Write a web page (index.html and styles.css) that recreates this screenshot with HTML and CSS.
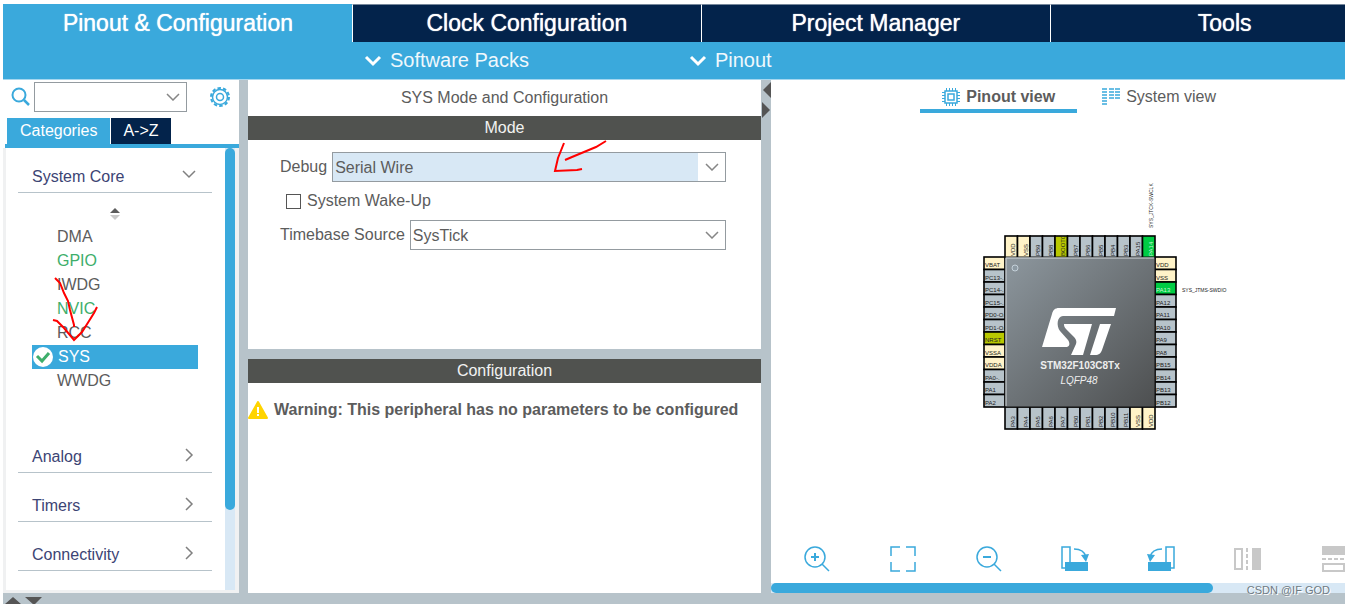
FILE: index.html
```html
<!DOCTYPE html>
<html lang="en">
<head>
    <meta charset="UTF-8">
    <meta name="viewport" content="width=device-width, initial-scale=1.0">
    <title>Pinout & Configuration</title>
    <link rel="stylesheet" href="styles.css">
</head>
<body>
    <div class="app">
        <nav class="main-tabs">
            <button class="main-tab active">Pinout &amp; Configuration</button>
            <button class="main-tab">Clock Configuration</button>
            <button class="main-tab">Project Manager</button>
            <button class="main-tab">Tools</button>
        </nav>

        <div class="sub-bar">
            <button class="sub-menu">
                <svg width="18" height="12" viewBox="0 0 18 12"><path d="M2 2l7 7 7-7" fill="none" stroke="#fff" stroke-width="3"/></svg>
                Software Packs
            </button>
            <button class="sub-menu">
                <svg width="18" height="12" viewBox="0 0 18 12"><path d="M2 2l7 7 7-7" fill="none" stroke="#fff" stroke-width="3"/></svg>
                Pinout
            </button>
        </div>

        <main class="workspace">
            <aside class="sidebar">
                <div class="search-row">
                    <svg width="20" height="20" viewBox="0 0 20 20"><circle cx="8" cy="8" r="6.5" fill="none" stroke="#3aa9dc" stroke-width="2"/><path d="M13 13l5 5" stroke="#3aa9dc" stroke-width="2.5"/></svg>
                    <div class="combo search-combo">
                        <input type="text" class="combo-field" aria-label="Search">
                        <svg class="combo-arrow" width="14" height="8" viewBox="0 0 14 8"><path d="M1 1l6 6 6-6" fill="none" stroke="#868686" stroke-width="1.5"/></svg>
                    </div>
                    <button class="icon-button gear" aria-label="Settings">
                        <svg width="22" height="22" viewBox="0 0 22 22" fill="none" stroke="#3aa9dc">
                            <circle cx="11" cy="11" r="9" stroke-width="2" stroke-dasharray="3.5 2.15"/>
                            <circle cx="11" cy="11" r="7.5" stroke-width="1.5"/>
                            <circle cx="11" cy="11" r="3.5" stroke-width="1.5"/>
                        </svg>
                    </button>
                </div>

                <div class="side-tabs">
                    <button class="side-tab active">Categories</button>
                    <button class="side-tab">A-&gt;Z</button>
                </div>

                <div class="category-box">
                    <div class="categories">
                        <button class="category first">System Core
                            <svg width="14" height="20" viewBox="0 0 14 20"><path d="M1 4l6 6 6-6" fill="none" stroke="#808080" stroke-width="1.5"/></svg>
                        </button>
                        <div class="sort">
                            <svg width="10" height="14" viewBox="0 0 10 14"><path d="M0 6l5-5 5 5z" fill="#5c5c5c"/><path d="M0 8h10l-5 5z" fill="#c9c9c9"/></svg>
                        </div>
                        <ul class="items">
                            <li>DMA</li>
                            <li class="enabled">GPIO</li>
                            <li>IWDG</li>
                            <li class="enabled">NVIC</li>
                            <li>RCC</li>
                            <li class="selected">
                                <svg width="20" height="20" viewBox="0 0 20 20"><circle cx="10" cy="10" r="10" fill="#fff"/><path d="M4 9l5 5 7-8" fill="none" stroke="#3eae6b" stroke-width="3"/></svg>
                                SYS
                            </li>
                            <li>WWDG</li>
                        </ul>
                        <button class="category">Analog
                            <svg width="14" height="20" viewBox="0 0 14 20"><path d="M4 2l6 6-6 6" fill="none" stroke="#808080" stroke-width="1.5"/></svg>
                        </button>
                        <button class="category">Timers
                            <svg width="14" height="20" viewBox="0 0 14 20"><path d="M4 2l6 6-6 6" fill="none" stroke="#808080" stroke-width="1.5"/></svg>
                        </button>
                        <button class="category">Connectivity
                            <svg width="14" height="20" viewBox="0 0 14 20"><path d="M4 2l6 6-6 6" fill="none" stroke="#808080" stroke-width="1.5"/></svg>
                        </button>
                    </div>
                    <div class="v-scroll"><div class="v-thumb"></div></div>
                </div>
            </aside>

            <section class="config">
                <div class="mode-panel">
                    <h1 class="panel-title">SYS Mode and Configuration</h1>
                    <h2 class="bar">Mode</h2>
                    <form class="mode-form">
                        <div class="field">
                            <label for="debug">Debug</label>
                            <div class="combo">
                                <select id="debug" class="combo-field highlighted">
                                    <option>Serial Wire</option>
                                </select>
                                <svg class="combo-arrow" width="14" height="8" viewBox="0 0 14 8"><path d="M1 1l6 6 6-6" fill="none" stroke="#868686" stroke-width="1.5"/></svg>
                            </div>
                        </div>
                        <div class="field check">
                            <input type="checkbox" id="wakeup">
                            <label for="wakeup">System Wake-Up</label>
                        </div>
                        <div class="field">
                            <label for="timebase">Timebase Source</label>
                            <div class="combo">
                                <select id="timebase" class="combo-field">
                                    <option>SysTick</option>
                                </select>
                                <svg class="combo-arrow" width="14" height="8" viewBox="0 0 14 8"><path d="M1 1l6 6 6-6" fill="none" stroke="#868686" stroke-width="1.5"/></svg>
                            </div>
                        </div>
                    </form>
                </div>
                <div class="params-panel">
                    <h2 class="bar">Configuration</h2>
                    <p class="warning">
                        <svg width="20" height="18" viewBox="0 0 20 18"><path d="M10 1L19 17H1z" fill="#ffd400" stroke="#ffd400" stroke-width="2" stroke-linejoin="round"/><path d="M10 6v6M10 13v2" stroke="#fff" stroke-width="2"/></svg>
                        <span>Warning: This peripheral has no parameters to be configured</span>
                    </p>
                </div>
            </section>

            <div class="splitter">
                <svg width="10" height="40" viewBox="0 0 10 40"><path d="M10 2v16L2 10z M1 22v16l8-8z" fill="#555"/></svg>
            </div>

            <section class="pinout">
                <div class="view-tabs">
                    <button class="view-tab active">
                        <svg width="18" height="18" viewBox="0 0 18 18" fill="none" stroke="#3aa9dc">
                            <path d="M4.500 0v3M7.500 0v3M10.500 0v3M13.500 0v3M4.500 15v3M7.500 15v3M10.500 15v3M13.500 15v3M0 4.500h3M0 7.500h3M0 10.500h3M0 13.500h3M15 4.500h3M15 7.500h3M15 10.500h3M15 13.500h3"/>
                            <rect x="3" y="3" width="12" height="12" stroke-width="1.500"/>
                            <rect x="6" y="6" width="6" height="6" stroke-width="1.500"/>
                        </svg>
                        Pinout view
                    </button>
                    <button class="view-tab">
                        <svg width="18" height="18" viewBox="0 0 18 18" stroke="#3aa9dc" stroke-width="1.5">
                            <path d="M0 1h5M0 4h5M0 7h5M0 10h5M0 13h5M0 16h5M7 1h5M7 4h5M7 7h5M7 10h5M13 1h5M13 4h5M13 7h5M13 10h5"/>
                        </svg>
                        System view
                    </button>
                </div>

                <div class="chip-area">
                    <svg class="chip" width="260" height="260" viewBox="975 175 260 260">
                        <defs>
                            <linearGradient id="body" x1="0" y1="0" x2="1" y2="1">
                                <stop offset="0" stop-color="#8d979e"/>
                                <stop offset="1" stop-color="#4d4f50"/>
                            </linearGradient>
                        </defs>
                        <g id="pins"></g>
                        <rect x="1005" y="257" width="150" height="150" fill="url(#body)" stroke="#111"/>
                        <path d="M1006 406V258h148" fill="none" stroke="#d5dadd"/>
                        <circle cx="1015" cy="268" r="3" fill="#8d9aa3" stroke="#c4d0d8"/>
                        <!-- ST logo -->
                        <g fill="#fff">
                            <path d="M1116 308L1114 316H1063C1057 316 1056 326 1060 331L1068 340C1070 343 1070 346 1067 347H1042L1052 314C1053 310 1055 308 1059 308z"/>
                            <path d="M1064 324H1092L1083 355H1071L1076 344C1077 341 1076 339 1073 336L1066 329C1064 327 1064 325 1064 324z"/>
                            <path d="M1100 324H1111L1102 350C1101 353 1099 355 1095 355H1090z"/>
                        </g>
                        <text class="chip-name" x="1080" y="369">STM32F103C8Tx</text>
                        <text class="chip-package" x="1079" y="384">LQFP48</text>
                        <text class="signal" x="1182" y="292">SYS_JTMS-SWDIO</text>
                        <text class="signal" transform="translate(1153 228) rotate(-90)">SYS_JTCK-SWCLK</text>
                    </svg>
                </div>

                <div class="toolbar">
                    <button class="icon-button" aria-label="Zoom in">
                        <svg width="26" height="26" viewBox="0 0 26 26" fill="none" stroke="#3aa9dc" stroke-width="1.5"><circle cx="11" cy="11" r="10"/><path d="M18 18l7 7"/><path d="M7 11h8M11 7v8" stroke-width="2"/></svg>
                    </button>
                    <button class="icon-button" aria-label="Fit">
                        <svg width="26" height="26" viewBox="0 0 26 26" fill="none" stroke="#3aa9dc" stroke-width="1.5"><path d="M1 10V1h9M16 1h9v9M25 16v9h-9M10 25H1v-9"/></svg>
                    </button>
                    <button class="icon-button" aria-label="Zoom out">
                        <svg width="26" height="26" viewBox="0 0 26 26" fill="none" stroke="#3aa9dc" stroke-width="1.5"><circle cx="11" cy="11" r="10"/><path d="M18 18l7 7"/><path d="M7 11h8" stroke-width="2"/></svg>
                    </button>
                    <button class="icon-button" aria-label="Rotate right">
                        <svg width="28" height="26" viewBox="0 0 28 26"><path d="M1 1h8v21H1zM13 3q10 0 12 8" fill="none" stroke="#3aa9dc" stroke-width="1.5"/><path d="M4 16h23v9H4zM20 9l8-1-3 8z" fill="#3aa9dc"/></svg>
                    </button>
                    <button class="icon-button" aria-label="Rotate left">
                        <svg width="28" height="26" viewBox="0 0 28 26"><path d="M27 1h-8v21h8zM15 3Q5 3 3 11" fill="none" stroke="#3aa9dc" stroke-width="1.5"/><path d="M24 16H1v9h23zM8 9L0 8l3 8z" fill="#3aa9dc"/></svg>
                    </button>
                    <button class="icon-button" aria-label="Flip horizontally">
                        <svg width="28" height="26" viewBox="0 0 28 26"><path d="M2 3h7v20H2z" fill="none" stroke="#c8c8c8" stroke-width="2"/><path d="M14 2v22" stroke="#c8c8c8" stroke-width="2" stroke-dasharray="4 2"/><path d="M19 2h9v22h-9z" fill="#c8c8c8"/></svg>
                    </button>
                    <button class="icon-button" aria-label="Flip vertically">
                        <svg width="26" height="28" viewBox="0 0 26 28"><path d="M2 1h23v9H2z" fill="#c8c8c8"/><path d="M2 14h23" stroke="#c8c8c8" stroke-width="2" stroke-dasharray="4 2"/><path d="M3 19h21v7H3z" fill="none" stroke="#c8c8c8" stroke-width="2"/></svg>
                    </button>
                </div>
                <div class="h-scroll"><div class="h-thumb"></div></div>
            </section>
        </main>

        <footer class="bottom-bar">
            <svg width="40" height="8" viewBox="0 0 40 8"><path d="M2 8l8-7 8 7zM22 1h17l-8 8z" fill="#555"/></svg>
        </footer>

        <!-- hand drawn arrows -->
        <svg class="marks" width="700" height="400" viewBox="0 0 700 400">
            <path d="M55 278l5 5 4 10 4 8 2 9 4 15 0 2M53 320l4 1 7 7 10 12 8-8 7-11 5-8 3-6"/>
            <path d="M564 143l-6 15-3 13 22-1 5-1M606 141l-10 6-12 5-12 5-7 3"/>
        </svg>
        <span class="credit">CSDN @IF GOD</span>
    </div>

    <script src="script.js"></script>
</body>
</html>
```

FILE: script.js
```js
// pins of the LQFP48 package, listed left to right and top to bottom
const sides = {
    left: ['VBAT', 'PC13-.', 'PC14-.', 'PC15-.', 'PD0-O.', 'PD1-O.', 'NRST', 'VSSA', 'VDDA', 'PA0-.', 'PA1', 'PA2'],
    right: ['VDD', 'VSS', 'PA13', 'PA12', 'PA11', 'PA10', 'PA9', 'PA8', 'PB15', 'PB14', 'PB13', 'PB12'],
    top: ['VDD', 'VSS', 'PB9', 'PB8', 'BOOT0', 'PB7', 'PB6', 'PB5', 'PB4', 'PB3', 'PA15', 'PA14'],
    bottom: ['PA3', 'PA4', 'PA5', 'PA6', 'PA7', 'PB0', 'PB1', 'PB2', 'PB10', 'PB11', 'VSS', 'VDD']
};

const step = 12.5;
const svgNs = 'http://www.w3.org/2000/svg';
const group = document.getElementById('pins');

function pinColor(name) {
    if (name.startsWith('V')) return '#fff3c8';
    if (name === 'NRST' || name === 'BOOT0') return '#b9c800';
    if (name === 'PA13' || name === 'PA14') return '#00cc44';
    return '#b7c3ca';
}

function add(tag, attrs) {
    const el = document.createElementNS(svgNs, tag);
    for (const key in attrs) {
        el.setAttribute(key, attrs[key]);
    }
    group.appendChild(el);
    return el;
}

Object.keys(sides).forEach(function(side) {
    const upright = side === 'left' || side === 'right';
    sides[side].forEach(function(name, i) {
        const x = upright ? (side === 'left' ? 984 : 1155) : 1005 + i * step;
        const y = upright ? 257 + i * step : (side === 'top' ? 236 : 407);
        add('rect', {
            x: x, y: y,
            width: upright ? 21 : step,
            height: upright ? step : 22,
            fill: pinColor(name),
            stroke: '#000', 'stroke-width': 1.6
        });
        const text = add('text', {
            class: name === 'PA13' || name === 'PA14' ? 'pin-label used' : 'pin-label',
            transform: upright
                ? 'translate(' + (x + 1) + ' ' + (y + 10) + ')'
                : 'translate(' + (x + 10) + ' ' + (y + 20) + ') rotate(-90)'
        });
        text.textContent = name;
    });
});
```

FILE: styles.css
```css
* {
    box-sizing: border-box;
}
body {
    margin: 0;
    font-family: "Liberation Sans", Arial, sans-serif;
    font-size: 16px;
    color: #5c5c5c;
    background-color: #fff;
}
button, input, select {
    font: inherit;
    color: inherit;
}
button {
    border: none;
    background: none;
    padding: 0;
    cursor: pointer;
}
svg {
    flex-shrink: 0;
}
.app {
    position: relative;
    display: flex;
    flex-direction: column;
    min-height: 100vh;
    padding: 4px 0 0 3px;
    overflow: hidden;
}

/* header */
.main-tabs {
    display: grid;
    grid-template-columns: repeat(4, 26%);
    height: 38px;
    background-color: #03234b;
}
.main-tab {
    color: #fff;
    font-size: 23px;
    text-shadow: 0 0 1px #fff;
    border-top: 1px solid #76879b;
    border-left: 1px solid #fff;
}
.main-tab.active {
    background-color: #3aa9dc;
    border-color: #3aa9dc;
}
.sub-bar {
    display: flex;
    gap: 160px;
    height: 38px;
    padding-left: 361px;
    background-color: #3aa9dc;
    border-bottom: 1px solid #a5d7ef;
}
.sub-menu {
    display: flex;
    align-items: center;
    gap: 8px;
    color: #f0f8fc;
    font-size: 20px;
}

.workspace {
    flex: 1;
    display: grid;
    grid-template-columns: 236px 522px 10px 1fr;
}

/* sidebar */
.sidebar {
    display: flex;
    flex-direction: column;
}
.search-row {
    display: flex;
    align-items: center;
    gap: 3px;
    height: 34px;
    padding-left: 8px;
}
.combo {
    position: relative;
    flex: 1;
}
.search-combo {
    flex: 0 0 153px;
}
.combo-field {
    display: block;
    appearance: none;
    width: 100%;
    height: 30px;
    padding: 0 28px 0 2px;
    border: 1px solid #949ba0;
    border-radius: 0;
    background-color: #fff;
}
.combo-field.highlighted {
    background-image: linear-gradient(#d8e8f5, #d8e8f5);
    background-size: calc(100% - 27px) 100%;
    background-repeat: no-repeat;
}
.combo-arrow {
    position: absolute;
    right: 7px;
    top: 11px;
    pointer-events: none;
}
.gear {
    margin-left: 19px;
    height: 22px;
}
.side-tabs {
    display: flex;
    gap: 1px;
    margin: 4px 0 0 2px;
    padding-left: 2px;
    border-bottom: 4px solid #3aa9dc;
}
.side-tab {
    height: 26px;
    padding: 0 12px;
    color: #fff;
    background-color: #03234b;
}
.side-tab.active {
    background-color: #3aa9dc;
    padding: 0 13px;
}
.category-box {
    flex: 1;
    display: flex;
    border: 3px solid #f0f1f2;
    border-top: none;
    border-right-width: 4px;
}
.categories {
    flex: 1;
    padding: 0 13px 12px 12px;
}
.category {
    display: flex;
    align-items: flex-end;
    justify-content: space-between;
    width: 100%;
    height: 49px;
    padding: 0 16px 5px 14px;
    line-height: 20px;
    color: #3c4474;
    border-bottom: 1px solid #b7c3ca;
}
.category.first {
    height: 45px;
}
.sort {
    display: flex;
    justify-content: center;
    padding: 14px 0 4px;
}
.items {
    list-style: none;
    margin: 0 14px 31px;
    padding: 0;
    line-height: 24px;
}
.items li {
    padding-left: 25px;
}
.items .enabled {
    color: #3eae6b;
}
.items .selected {
    display: flex;
    align-items: center;
    gap: 5px;
    padding-left: 1px;
    color: #fff;
    background-color: #3aa9dc;
}
.v-scroll {
    width: 10px;
    background-color: #d8e8f5;
}
.v-thumb {
    height: 82%;
    border-radius: 5px;
    background-color: #3aa9dc;
}

/* mode and configuration */
.config {
    display: flex;
    flex-direction: column;
    gap: 10px;
    padding-left: 9px;
    background-color: #b7c3ca;
}
.mode-panel {
    height: 269px;
    background-color: #fff;
}
.params-panel {
    flex: 1;
    background-color: #fff;
}
.panel-title {
    margin: 0;
    font-size: 16px;
    font-weight: normal;
    line-height: 36px;
    text-align: center;
}
.bar {
    margin: 0;
    font-size: 16px;
    font-weight: normal;
    line-height: 24px;
    text-align: center;
    color: #f2f2f2;
    background-color: #50524f;
}
.mode-form {
    display: flex;
    flex-direction: column;
    gap: 10px;
    padding: 12px 35px 0 32px;
}
.field {
    display: flex;
    align-items: center;
    gap: 5px;
}
.field.check {
    gap: 6px;
    padding-left: 6px;
}
.field input[type="checkbox"] {
    appearance: none;
    width: 15px;
    height: 15px;
    margin: 0;
    border: 1px solid #555;
}
.warning {
    display: flex;
    align-items: center;
    gap: 6px;
    margin: 18px 0 0;
    font-weight: bold;
    white-space: nowrap;
}

.splitter {
    background-color: #b7c3ca;
}
.splitter svg {
    display: block;
}

/* pinout */
.pinout {
    display: flex;
    flex-direction: column;
    min-width: 0;
    overflow: hidden;
}
.view-tabs {
    display: flex;
    gap: 3px;
    padding-left: 26%;
}
.view-tab {
    display: flex;
    align-items: center;
    gap: 6px;
    height: 33px;
    padding: 4px 22px 0;
    border-bottom: 4px solid transparent;
}
.view-tab.active {
    font-weight: bold;
    border-color: #3aa9dc;
}
.chip-area {
    flex: 1;
    padding: 62px 0 0 204px;
}
.chip {
    display: block;
}
.pin-label {
    font-size: 6px;
    fill: #222;
}
.pin-label.used {
    fill: #c8f5d6;
}
.signal {
    font-size: 5px;
    fill: #222;
}
.chip-name {
    font-size: 10px;
    font-weight: bold;
    fill: #eee;
    text-anchor: middle;
}
.chip-package {
    font-size: 10px;
    font-style: italic;
    fill: #eee;
    text-anchor: middle;
}
.toolbar {
    display: flex;
    padding: 0 0 10px 3px;
}
.icon-button {
    display: flex;
    align-items: center;
    justify-content: center;
}
.toolbar .icon-button {
    flex: 0 0 86px;
}
.h-scroll {
    height: 10px;
    background-color: #d8e8f5;
}
.h-thumb {
    width: 77%;
    height: 10px;
    border-radius: 5px;
    background-color: #3aa9dc;
}

.bottom-bar {
    display: flex;
    align-items: flex-end;
    height: 11px;
    background-color: #b7c3ca;
}

.marks {
    position: absolute;
    left: 0;
    top: 0;
    fill: none;
    stroke: #f00;
    stroke-width: 2;
    pointer-events: none;
}
.credit {
    position: absolute;
    right: 15px;
    bottom: 7px;
    font-size: 11px;
    line-height: 14px;
    color: #6f7a82;
    text-shadow: 1px 1px 0 #fff;
}
```
